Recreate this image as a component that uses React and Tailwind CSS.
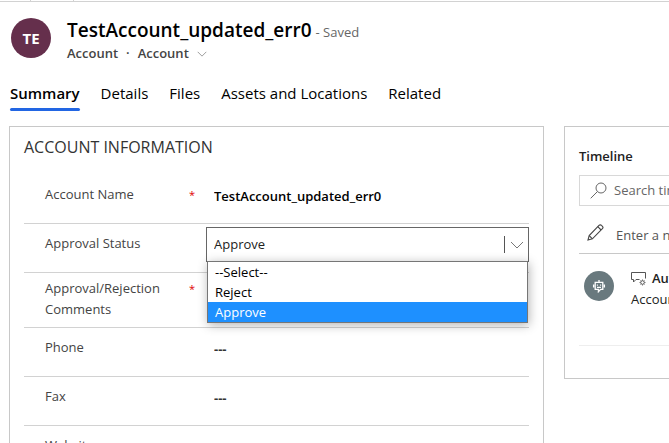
import { useState } from "react";

const TABS = ["Summary", "Details", "Files", "Assets and Locations", "Related"];
const OPTIONS = ["--Select--", "Reject", "Approve"];

function Chevron({ className }) {
  return (
    <svg viewBox="0 0 14 8" className={className} fill="none" stroke="currentColor" aria-hidden="true">
      <path d="M1 1l6 6 6-6" />
    </svg>
  );
}

function SearchIcon() {
  return (
    <svg viewBox="0 0 17 17" className="size-[17px] shrink-0" fill="none" stroke="#666" aria-hidden="true">
      <circle cx="11" cy="6" r="5" />
      <path d="M7.4 9.6L.7 16.3" />
    </svg>
  );
}

function PencilIcon() {
  return (
    <svg viewBox="0 0 17 17" className="mb-[6px] size-[17px] shrink-0" fill="none" stroke="#444" strokeWidth="1.1" aria-hidden="true">
      <path d="M1 16l1.2-4.4L12 1.4a1.7 1.7 0 0 1 2.5 0l.9.9a1.7 1.7 0 0 1 0 2.4L5.4 14.8z" />
      <path d="M2.2 11.6l3.2 3.2M10.8 2.7l3.3 3.3" />
    </svg>
  );
}

function RobotIcon() {
  return (
    <svg viewBox="0 0 14 14" className="size-[14px]" fill="none" stroke="#fff" strokeWidth="1.3" aria-hidden="true">
      <path d="M7 1v2.3M3.2 3.3h7.6v7H8.6L6.4 12.7v-2.4H3.2zM1.6 5.5v3M12.4 5.5v3" />
      <path d="M5.4 5.4v1.3M8.6 5.4v1.3M5 8.4h4" strokeWidth="1.1" />
    </svg>
  );
}

function PostIcon() {
  return (
    <svg viewBox="0 0 16 14" className="h-[14px] w-4 shrink-0" fill="none" stroke="#555" aria-hidden="true">
      <path d="M8.5 7.5H5L2.5 10V7.5h-2v-7h14v6" />
      <circle cx="11.5" cy="10.5" r="1.8" />
      <path d="M11.5 7.4v1.2M11.5 12.4v1.2M8.4 10.5h1.2M13.4 10.5h1.2M9.4 8.4l.8.8M12.8 11.8l.8.8M13.6 8.4l-.8.8M10.2 11.8l-.8.8" strokeWidth=".7" />
    </svg>
  );
}

function Row({ label, htmlFor, required, tall, children }) {
  return (
    <div className={`flex border-b border-[#d2d2d2] pl-[21px] ${tall ? "pt-[5px] pb-[7px]" : "h-[49px] pt-[9px]"}`}>
      <label htmlFor={htmlFor} className="w-36 shrink-0 text-[#444]">
        {label}
      </label>
      <span className="w-[17px] shrink-0 text-[11px] text-[#e00000]">{required ? "*" : ""}</span>
      <div className="min-w-0 flex-1">{children}</div>
    </div>
  );
}

const valueClass = "block w-full bg-transparent px-2 pt-[2px] leading-[21px] outline-none";

export default function App() {
  const [status, setStatus] = useState("Approve");

  return (
    <div className="h-screen overflow-hidden bg-white font-['Open_Sans','Noto_Sans',sans-serif] text-[13px] leading-[21px] text-black">
      <div className="flex h-[2px] border-b border-[#d2d2d2]">
        <span className="w-[31px] border-r border-[#d2d2d2]" />
        <span className="w-[43px] border-r border-[#d2d2d2]" />
      </div>

      <header className="flex gap-4 pt-4 pl-[11px]">
        <div className="flex size-10 shrink-0 items-center justify-center rounded-full bg-[#652f4c] text-[15px] font-bold text-white">
          TE
        </div>
        <div>
          <div className="flex items-baseline gap-1">
            <h1 className="text-[19px] leading-6 font-semibold">TestAccount_updated_err0</h1>
            <span className="text-[#666]">- Saved</span>
          </div>
          <div className="flex items-center gap-2 font-semibold text-[#444]">
            <span>Account</span>
            <span>·</span>
            <button type="button" className="flex items-center gap-2">
              Account
              <Chevron className="h-[6px] w-[10px] text-[#777]" />
            </button>
          </div>
        </div>
      </header>

      <nav className="flex gap-[21px] pt-[17px] pl-[10px] text-[15px] leading-6">
        {TABS.map((tab, i) => (
          <button
            key={tab}
            type="button"
            className={`relative pb-[6px] whitespace-nowrap ${i === 0 ? "font-semibold" : ""}`}
          >
            {tab}
            {i === 0 && <span className="absolute inset-x-0 bottom-0 h-[3px] rounded-full bg-[#2266e3]" />}
          </button>
        ))}
      </nav>

      <main className="mt-[15px] grid grid-cols-[minmax(0,535fr)_minmax(0,105fr)] items-start gap-5 pl-[9px]">
        <section className="border border-[#c8c8c8] px-[14px] pb-6">
          <h2 className="pt-2 pb-4 text-base leading-6 text-[#333]">ACCOUNT INFORMATION</h2>

          <Row label="Account Name" htmlFor="account-name" required>
            <input id="account-name" defaultValue="TestAccount_updated_err0" className={`${valueClass} font-semibold`} />
          </Row>

          <Row label="Approval Status" htmlFor="approval-status">
            <div className="relative -mt-[6px]">
              <select
                id="approval-status"
                value={status}
                onChange={(e) => setStatus(e.target.value)}
                className="block h-[35px] w-full appearance-none border border-[#666] bg-white px-[7px] text-[13px] text-[#222] outline-none"
              >
                {OPTIONS.map((o) => (
                  <option key={o}>{o}</option>
                ))}
              </select>
              <span className="pointer-events-none absolute inset-y-[9px] right-[5px] flex items-center border-l border-[#555] pl-[5px]">
                <Chevron className="h-2 w-[14px] text-[#777]" />
              </span>
              <ul
                role="listbox"
                aria-label="Approval Status"
                className="absolute inset-x-px top-[34px] z-10 border border-[#767676] bg-white text-[13px] leading-5 shadow-[1px_2px_10px_rgba(0,0,0,0.3)]"
              >
                {OPTIONS.map((o) => (
                  <li
                    key={o}
                    role="option"
                    aria-selected={o === status}
                    onClick={() => setStatus(o)}
                    className={`px-[7px] ${o === status ? "bg-[#1e90ff] text-white" : ""}`}
                  >
                    {o}
                  </li>
                ))}
              </ul>
            </div>
          </Row>

          <Row label="Approval/Rejection Comments" htmlFor="comments" required tall>
            <input id="comments" className={valueClass} />
          </Row>
          <Row label="Phone" htmlFor="phone">
            <input id="phone" defaultValue="---" className={`${valueClass} font-bold text-[#333]`} />
          </Row>
          <Row label="Fax" htmlFor="fax">
            <input id="fax" defaultValue="---" className={`${valueClass} font-bold text-[#333]`} />
          </Row>
          <Row label="Website" htmlFor="website">
            <input id="website" defaultValue="---" className={`${valueClass} font-bold text-[#333]`} />
          </Row>
        </section>

        <section className="overflow-hidden border border-r-0 border-[#c8c8c8] pb-8 pl-[14px] whitespace-nowrap">
          <h2 className="pt-[19px] pb-2 font-semibold text-[#222]">Timeline</h2>
          <label className="flex h-[31px] items-center gap-[7px] border border-r-0 border-[#d8d8d8] pl-[10px]">
            <SearchIcon />
            <input
              aria-label="Search timeline"
              placeholder="Search timeline"
              className="w-28 shrink-0 outline-none placeholder:text-[#666]"
            />
          </label>
          <label className="flex h-12 items-center gap-3 border-b border-[#c8c8c8] pt-3 pl-2">
            <PencilIcon />
            <input
              aria-label="Enter a note"
              placeholder="Enter a note..."
              className="w-28 shrink-0 outline-none placeholder:text-[#555]"
            />
          </label>
          <article className="flex h-[92px] gap-[17px] border-b border-[#eee] pt-[14px] pl-[5px]">
            <div className="mt-[3px] flex size-[30px] shrink-0 items-center justify-center rounded-full bg-[#69797e]">
              <RobotIcon />
            </div>
            <div className="text-[#222]">
              <div className="flex items-center gap-[5px] font-semibold">
                <PostIcon />
                Auto-post
              </div>
              <p>Account</p>
            </div>
          </article>
        </section>
      </main>
    </div>
  );
}
